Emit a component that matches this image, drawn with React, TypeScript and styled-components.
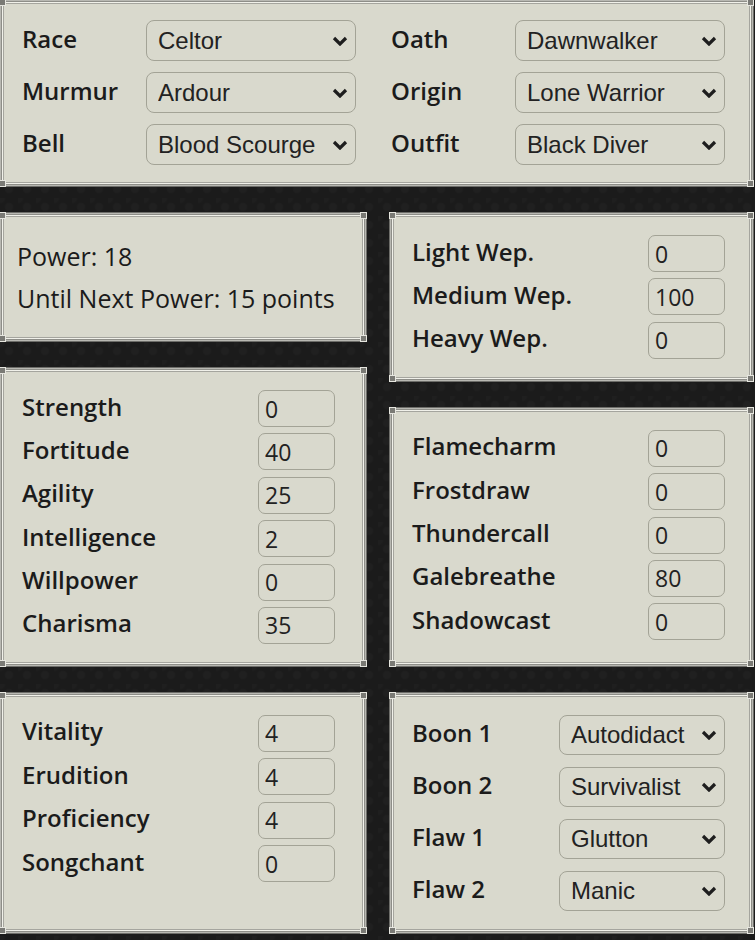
import React from 'react';
import styled, { createGlobalStyle } from 'styled-components';

// Data
interface Field {
  label: string;
  value: string;
}

const identityLeft: Field[] = [
  { label: 'Race', value: 'Celtor' },
  { label: 'Murmur', value: 'Ardour' },
  { label: 'Bell', value: 'Blood Scourge' },
];

const identityRight: Field[] = [
  { label: 'Oath', value: 'Dawnwalker' },
  { label: 'Origin', value: 'Lone Warrior' },
  { label: 'Outfit', value: 'Black Diver' },
];

const attributes: Field[] = [
  { label: 'Strength', value: '0' },
  { label: 'Fortitude', value: '40' },
  { label: 'Agility', value: '25' },
  { label: 'Intelligence', value: '2' },
  { label: 'Willpower', value: '0' },
  { label: 'Charisma', value: '35' },
];

const weapons: Field[] = [
  { label: 'Light Wep.', value: '0' },
  { label: 'Medium Wep.', value: '100' },
  { label: 'Heavy Wep.', value: '0' },
];

const attunements: Field[] = [
  { label: 'Flamecharm', value: '0' },
  { label: 'Frostdraw', value: '0' },
  { label: 'Thundercall', value: '0' },
  { label: 'Galebreathe', value: '80' },
  { label: 'Shadowcast', value: '0' },
];

const traits: Field[] = [
  { label: 'Vitality', value: '4' },
  { label: 'Erudition', value: '4' },
  { label: 'Proficiency', value: '4' },
  { label: 'Songchant', value: '0' },
];

const talents: Field[] = [
  { label: 'Boon 1', value: 'Autodidact' },
  { label: 'Boon 2', value: 'Survivalist' },
  { label: 'Flaw 1', value: 'Glutton' },
  { label: 'Flaw 2', value: 'Manic' },
];

// Styles
const GlobalStyle = createGlobalStyle`
  html, body {
    margin: 0;
    padding: 0;
  }
  body {
    background-color: #1b1b1b;
    background-image:
      radial-gradient(circle at 50% 50%, rgba(255, 255, 255, 0.022) 3px, transparent 5px),
      radial-gradient(circle at 0 0, rgba(255, 255, 255, 0.018) 4px, transparent 6px);
    background-size: 18px 18px;
    min-height: 940px;
  }
`;

const Page = styled.div`
  width: 753px;
  padding-bottom: 10px;
`;

const Panel = styled.section`
  position: relative;
  box-sizing: border-box;
  background: #d9d9cd;
  border: 1px solid #b8b8b2;
  box-shadow:
    0 0 0 1px #6d6d69,
    inset 0 0 0 1px #8e8e88,
    inset 0 0 0 2px #f1f1ea,
    inset 0 0 0 3px #a5a59e;
  color: #1b1b1b;
`;

const Corner = styled.span<{ $v: 'top' | 'bottom'; $h: 'left' | 'right' }>`
  position: absolute;
  width: 5px;
  height: 5px;
  ${({ $v }) => $v}: -2px;
  ${({ $h }) => $h}: -2px;
  border: 1px solid #e6e6df;
  background: #7a7a75;
`;

const Corners = () => (
  <>
    <Corner $v="top" $h="left" />
    <Corner $v="top" $h="right" />
    <Corner $v="bottom" $h="left" />
    <Corner $v="bottom" $h="right" />
  </>
);

const IdentityPanel = styled(Panel)`
  display: flex;
  gap: 35px;
  padding: 19px 26px 20px 21px;
`;

const IdentityColumn = styled.div`
  display: grid;
  grid-template-columns: 124px 210px;
  grid-auto-rows: 41px;
  row-gap: 11px;
  align-items: center;
`;

const Columns = styled.div`
  display: grid;
  grid-template-columns: 366px 363px;
  column-gap: 24px;
  row-gap: 27px;
  margin-top: 27px;
`;

const Stack = styled.div`
  display: flex;
  flex-direction: column;
  gap: 27px;
`;

const PowerPanel = styled(Panel)`
  height: 128px;
  padding: 21px 10px 0 16px;
  font-family: 'Open Sans', 'Noto Sans', sans-serif;
  font-size: 25px;
  line-height: 42px;
  white-space: nowrap;
`;

const FieldPanel = styled(Panel)<{ $grow?: boolean; $pad?: number }>`
  flex: ${({ $grow }) => ($grow ? 1 : '0 0 auto')};
  display: grid;
  grid-template-columns: 1fr 77px;
  grid-auto-rows: 37px;
  row-gap: 6.4px;
  align-content: start;
  align-items: center;
  padding: 21px ${({ $pad }) => $pad ?? 30}px 21px 21px;
`;

const TalentPanel = styled(Panel)`
  display: grid;
  grid-template-columns: 1fr 166px;
  grid-auto-rows: 40px;
  row-gap: 12px;
  align-items: center;
  padding: 21px 27px 21px 21px;
`;

const Label = styled.label`
  font-family: 'Open Sans', 'Noto Sans', sans-serif;
  font-weight: 600;
  font-size: 24px;
  color: #1b1b1b;
  white-space: nowrap;
  padding-bottom: 5px;
`;

const NumberInput = styled.input`
  box-sizing: border-box;
  width: 77px;
  height: 37px;
  padding: 0 6px;
  border: 1.5px solid #a3a396;
  border-radius: 7px;
  background: transparent;
  font-family: 'Open Sans', 'Noto Sans', sans-serif;
  font-size: 23px;
  color: #222;
  outline: none;
`;

const SelectWrap = styled.div<{ $h: number }>`
  position: relative;
  height: ${({ $h }) => $h}px;
`;

const Select = styled.select`
  appearance: none;
  box-sizing: border-box;
  width: 100%;
  height: 100%;
  padding: 0 30px 0 11px;
  border: 1.5px solid #a3a396;
  border-radius: 8px;
  background: transparent;
  font-family: 'Liberation Sans', Arial, sans-serif;
  font-size: 24px;
  color: #222;
  outline: none;
`;

const Chevron = styled.svg`
  position: absolute;
  right: 8px;
  top: 50%;
  margin-top: -5px;
  width: 16px;
  height: 10px;
  pointer-events: none;
`;

const DropDown: React.FC<{ value: string; height: number }> = ({ value, height }) => (
  <SelectWrap $h={height}>
    <Select defaultValue={value}>
      <option>{value}</option>
    </Select>
    <Chevron viewBox="0 0 16 10">
      <polyline points="2,2 8,8 14,2" fill="none" stroke="#1e1e1e" strokeWidth="3.2" />
    </Chevron>
  </SelectWrap>
);

const NumberRows: React.FC<{ fields: Field[] }> = ({ fields }) => (
  <>
    {fields.map((f) => (
      <React.Fragment key={f.label}>
        <Label>{f.label}</Label>
        <NumberInput type="text" defaultValue={f.value} />
      </React.Fragment>
    ))}
  </>
);

const SelectRows: React.FC<{ fields: Field[]; height: number }> = ({ fields, height }) => (
  <>
    {fields.map((f) => (
      <React.Fragment key={f.label}>
        <Label>{f.label}</Label>
        <DropDown value={f.value} height={height} />
      </React.Fragment>
    ))}
  </>
);

export default function App() {
  return (
    <Page>
      <GlobalStyle />
      <IdentityPanel>
        <Corners />
        <IdentityColumn>
          <SelectRows fields={identityLeft} height={41} />
        </IdentityColumn>
        <IdentityColumn>
          <SelectRows fields={identityRight} height={41} />
        </IdentityColumn>
      </IdentityPanel>

      <Columns>
        <Stack>
          <PowerPanel>
            <Corners />
            <div>Power: 18</div>
            <div>Until Next Power: 15 points</div>
          </PowerPanel>
          <FieldPanel $grow $pad={30}>
            <Corners />
            <NumberRows fields={attributes} />
          </FieldPanel>
        </Stack>

        <Stack>
          <FieldPanel $pad={27}>
            <Corners />
            <NumberRows fields={weapons} />
          </FieldPanel>
          <FieldPanel $grow $pad={27}>
            <Corners />
            <NumberRows fields={attunements} />
          </FieldPanel>
        </Stack>

        <FieldPanel $pad={30}>
          <Corners />
          <NumberRows fields={traits} />
        </FieldPanel>

        <TalentPanel>
          <Corners />
          <SelectRows fields={talents} height={40} />
        </TalentPanel>
      </Columns>
    </Page>
  );
}
